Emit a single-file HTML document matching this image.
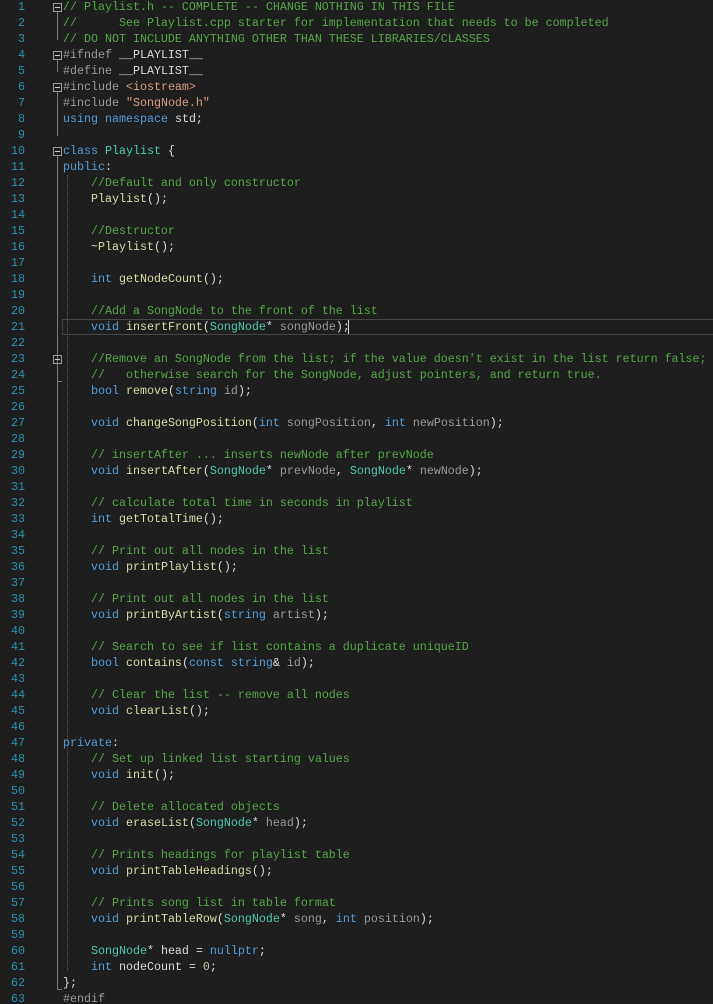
<!DOCTYPE html>
<html><head><meta charset="utf-8"><style>
html,body{margin:0;padding:0;background:#1e1e1e;width:713px;height:1004px;overflow:hidden}
#ed{position:relative;width:713px;height:1004px;font-family:"Liberation Mono",monospace;font-size:11.67px;color:#dcdcdc}
.l{position:absolute;left:63px;height:16px;line-height:16px;white-space:pre}
.n{position:absolute;width:25px;text-align:right;left:0;height:16px;line-height:16px;color:#2b91af}
.c{color:#57a64a}.k{color:#569cd6}.t{color:#4ec9b0}.f{color:#dcdcaa}.p{color:#9b9b9b}.s{color:#d69d85}.v{color:#9a9a9a}.m{color:#b5cea8}
.fb{position:absolute;left:53px;width:7px;height:7px;border:1px solid #999;}
.fb:after{content:"";position:absolute;left:1px;right:1px;top:3px;height:1px;background:#ccc}
.vl{position:absolute;left:57px;width:1px;background:#7a7a7a}
.ig{position:absolute;width:0;border-left:1px dotted #5a5a5a}
</style></head><body><div id="ed">
<div class="vl" style="top:12px;height:28px"></div>
<div class="vl" style="top:60px;height:12px"></div>
<div class="vl" style="top:92px;height:44px"></div>
<div class="vl" style="top:156px;height:834px"></div>
<div class="vl" style="top:989px;height:1px;width:5px"></div>
<div class="vl" style="top:381px;height:1px;width:5px"></div>
<div class="ig" style="left:67px;top:175px;height:796px"></div>
<div style="position:absolute;left:62px;top:319px;width:651px;height:14px;border:1px solid #464646"></div>
<div style="position:absolute;left:348px;top:320px;width:1px;height:14px;background:#dcdcdc"></div>
<div class="fb" style="top:3px"></div>
<div class="fb" style="top:51px"></div>
<div class="fb" style="top:83px"></div>
<div class="fb" style="top:147px"></div>
<div class="fb" style="top:355px"></div>
<div id="nums"></div>
<div class="l" style="top:-1px"><span class="c">// Playlist.h -- COMPLETE -- CHANGE NOTHING IN THIS FILE</span></div>
<div class="l" style="top:15px"><span class="c">//      See Playlist.cpp starter for implementation that needs to be completed</span></div>
<div class="l" style="top:31px"><span class="c">// DO NOT INCLUDE ANYTHING OTHER THAN THESE LIBRARIES/CLASSES</span></div>
<div class="l" style="top:47px"><span class="p">#ifndef</span> <span style="color:#dcdcdc">__PLAYLIST__</span></div>
<div class="l" style="top:63px"><span class="p">#define</span> <span style="color:#dcdcdc">__PLAYLIST__</span></div>
<div class="l" style="top:79px"><span class="p">#include</span> <span class="s">&lt;iostream&gt;</span></div>
<div class="l" style="top:95px"><span class="p">#include</span> <span class="s">"SongNode.h"</span></div>
<div class="l" style="top:111px"><span class="k">using</span> <span class="k">namespace</span> std;</div>
<div class="l" style="top:143px"><span class="k">class</span> <span class="t">Playlist</span> {</div>
<div class="l" style="top:159px"><span class="k">public</span>:</div>
<div class="l" style="top:175px">    <span class="c">//Default and only constructor</span></div>
<div class="l" style="top:191px">    <span class="f">Playlist</span>();</div>
<div class="l" style="top:223px">    <span class="c">//Destructor</span></div>
<div class="l" style="top:239px">    <span class="f">~Playlist</span>();</div>
<div class="l" style="top:271px">    <span class="k">int</span> <span class="f">getNodeCount</span>();</div>
<div class="l" style="top:303px">    <span class="c">//Add a SongNode to the front of the list</span></div>
<div class="l" style="top:319px">    <span class="k">void</span> <span class="f">insertFront</span>(<span class="t">SongNode</span>* <span class="v">songNode</span>);</div>
<div class="l" style="top:351px">    <span class="c">//Remove an SongNode from the list; if the value doesn't exist in the list return false;</span></div>
<div class="l" style="top:367px">    <span class="c">//   otherwise search for the SongNode, adjust pointers, and return true.</span></div>
<div class="l" style="top:383px">    <span class="k">bool</span> <span class="f">remove</span>(<span class="k">string</span> <span class="v">id</span>);</div>
<div class="l" style="top:415px">    <span class="k">void</span> <span class="f">changeSongPosition</span>(<span class="k">int</span> <span class="v">songPosition</span>, <span class="k">int</span> <span class="v">newPosition</span>);</div>
<div class="l" style="top:447px">    <span class="c">// insertAfter ... inserts newNode after prevNode</span></div>
<div class="l" style="top:463px">    <span class="k">void</span> <span class="f">insertAfter</span>(<span class="t">SongNode</span>* <span class="v">prevNode</span>, <span class="t">SongNode</span>* <span class="v">newNode</span>);</div>
<div class="l" style="top:495px">    <span class="c">// calculate total time in seconds in playlist</span></div>
<div class="l" style="top:511px">    <span class="k">int</span> <span class="f">getTotalTime</span>();</div>
<div class="l" style="top:543px">    <span class="c">// Print out all nodes in the list</span></div>
<div class="l" style="top:559px">    <span class="k">void</span> <span class="f">printPlaylist</span>();</div>
<div class="l" style="top:591px">    <span class="c">// Print out all nodes in the list</span></div>
<div class="l" style="top:607px">    <span class="k">void</span> <span class="f">printByArtist</span>(<span class="k">string</span> <span class="v">artist</span>);</div>
<div class="l" style="top:639px">    <span class="c">// Search to see if list contains a duplicate uniqueID</span></div>
<div class="l" style="top:655px">    <span class="k">bool</span> <span class="f">contains</span>(<span class="k">const</span> <span class="k">string</span>&amp; <span class="v">id</span>);</div>
<div class="l" style="top:687px">    <span class="c">// Clear the list -- remove all nodes</span></div>
<div class="l" style="top:703px">    <span class="k">void</span> <span class="f">clearList</span>();</div>
<div class="l" style="top:735px"><span class="k">private</span>:</div>
<div class="l" style="top:751px">    <span class="c">// Set up linked list starting values</span></div>
<div class="l" style="top:767px">    <span class="k">void</span> <span class="f">init</span>();</div>
<div class="l" style="top:799px">    <span class="c">// Delete allocated objects</span></div>
<div class="l" style="top:815px">    <span class="k">void</span> <span class="f">eraseList</span>(<span class="t">SongNode</span>* <span class="v">head</span>);</div>
<div class="l" style="top:847px">    <span class="c">// Prints headings for playlist table</span></div>
<div class="l" style="top:863px">    <span class="k">void</span> <span class="f">printTableHeadings</span>();</div>
<div class="l" style="top:895px">    <span class="c">// Prints song list in table format</span></div>
<div class="l" style="top:911px">    <span class="k">void</span> <span class="f">printTableRow</span>(<span class="t">SongNode</span>* <span class="v">song</span>, <span class="k">int</span> <span class="v">position</span>);</div>
<div class="l" style="top:943px">    <span class="t">SongNode</span>* head = <span class="k">nullptr</span>;</div>
<div class="l" style="top:959px">    <span class="k">int</span> nodeCount = <span class="m">0</span>;</div>
<div class="l" style="top:975px">};</div>
<div class="l" style="top:991px"><span class="p">#endif</span></div>
<script>
var h='';for(var i=1;i<=63;i++){h+='<div class="n" style="top:'+(16*(i-1)-1)+'px">'+i+'</div>';}
document.getElementById('nums').innerHTML=h;
</script>
</div></body></html>
